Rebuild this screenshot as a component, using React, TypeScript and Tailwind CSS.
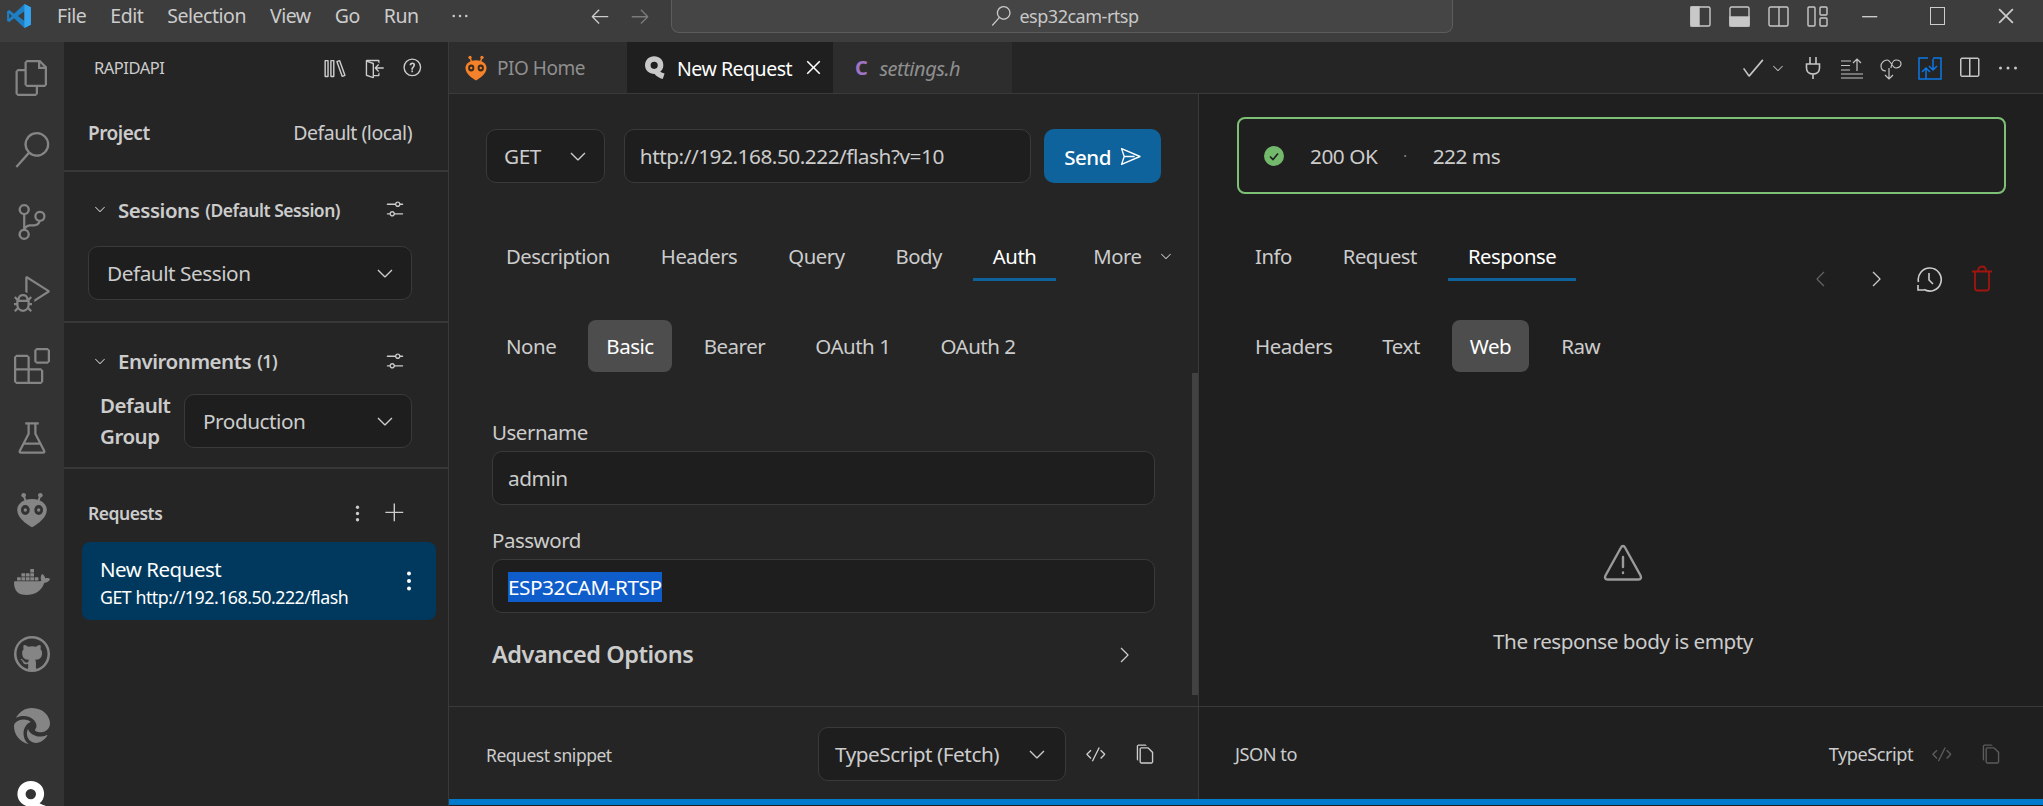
import { ReactNode } from "react";
import {
  VscFiles,
  VscSearch,
  VscSourceControl,
  VscDebugAlt,
  VscExtensions,
  VscBeaker,
  VscChevronDown,
  VscChevronRight,
  VscChevronLeft,
  VscArrowLeft,
  VscArrowRight,
  VscEllipsis,
  VscClose,
  VscChromeClose,
  VscChromeMinimize,
  VscCheck,
  VscLibrary,
  VscSignIn,
  VscQuestion,
  VscSettings,
  VscAdd,
  VscSplitHorizontal,
  VscCode,
  VscCopy,
} from "react-icons/vsc";
import { SiDocker } from "react-icons/si";
import { FaEdge, FaGithub } from "react-icons/fa6";

function RapidLogo({ className }: { className: string }) {
  return (
    <svg viewBox="0 0 24 28" className={className} fill="currentColor">
      <path
        fillRule="evenodd"
        d="M11 0c6.500 0 11 4.600 11 10.600 0 3.300-1.400 6-3.800 7.800 1.600 1 3.200 1.700 5.300 2.100l-2.200 6.600c-4-.7-7.400-3-9.800-5.800C5 21.300 0 16.800 0 10.800 0 4.700 4.600 0 11 0zm0 6.500a4.300 4.300 0 100 8.600 4.300 4.300 0 000-8.600z"
      />
    </svg>
  );
}

function PioLogo({ className, gray }: { className: string; gray?: boolean }) {
  const fill = gray ? "#858585" : "#f5822a";
  const eye = gray ? "#333333" : "#3a2a1c";
  return (
    <svg viewBox="0 0 24 28" className={className}>
      <path d="M7 7L5.500 2.500M17 7l1.500-4.500" stroke={fill} strokeWidth="1.500" />
      <circle cx="5.500" cy="2.500" r="1.800" fill={fill} />
      <circle cx="18.500" cy="2.500" r="1.800" fill={fill} />
      <path
        fill={fill}
        d="M12 5.500c6.500 0 11.500 3.500 11.500 8.500 0 6-7 11-11.500 13.500C7.500 25 .5 20 .5 14c0-5 5-8.500 11.500-8.500z"
      />
      <ellipse cx="6.800" cy="14" rx="3.400" ry="3.800" fill={eye} />
      <ellipse cx="17.200" cy="14" rx="3.400" ry="3.800" fill={eye} />
      <circle cx="6.800" cy="14" r="1.300" fill={fill} />
      <circle cx="17.200" cy="14" r="1.300" fill={fill} />
    </svg>
  );
}

function Kebab({ big }: { big?: boolean }) {
  return (
    <svg
      viewBox="0 0 6 20"
      className={big ? "w-[6px] h-[20px]" : "w-[5px] h-[17px]"}
      fill="currentColor"
    >
      <circle cx="3" cy="2.500" r="2" />
      <circle cx="3" cy="10" r="2" />
      <circle cx="3" cy="17.500" r="2" />
    </svg>
  );
}

function Activity() {
  const icon = "w-9 h-9";
  const items: ReactNode[] = [
    <VscFiles className={icon} />,
    <VscSearch className={icon} />,
    <VscSourceControl className={icon} />,
    <VscDebugAlt className={icon} />,
    <VscExtensions className={icon} />,
    <VscBeaker className={icon} />,
    <PioLogo className="w-[32px] h-[36px]" gray />,
    <SiDocker className={icon} />,
    <span className="w-[36px] h-[36px] rounded-full bg-[#858585] flex items-center justify-center">
      <FaGithub className="w-[32px] h-[32px] text-[#333333]" />
    </span>,
    <FaEdge className="w-[36px] h-[36px]" />,
    <RapidLogo className="w-[30px] h-[34px] text-white" />,
  ];
  return (
    <div className="w-16 shrink-0 bg-[#333333] text-[#858585] overflow-hidden flex flex-col">
      {items.map((it, i) => (
        <div key={i} className="h-[72px] shrink-0 flex items-center justify-center">
          {it}
        </div>
      ))}
    </div>
  );
}

function LayoutIcon({ kind }: { kind: string }) {
  return (
    <svg viewBox="0 0 21 21" className="w-[21px] h-[21px]" fill="none" stroke="#c8c8c8" strokeWidth="1.400">
      {kind === "grid" ? (
        <g>
          <rect x="1" y="1" width="7" height="19" rx="1" />
          <rect x="13" y="1" width="7" height="8" rx="1" />
          <rect x="13" y="12" width="7" height="8" rx="1" />
        </g>
      ) : (
        <rect x="1" y="1" width="19" height="19" rx="1.500" />
      )}
      {kind === "left" && <rect x="1" y="1" width="8" height="19" fill="#c8c8c8" />}
      {kind === "bottom" && <rect x="1" y="11" width="19" height="9" fill="#c8c8c8" />}
      {kind === "right" && <path d="M11 1v19" />}
    </svg>
  );
}

function VsLogo() {
  return (
    <svg viewBox="0 0 24 24" className="ml-[6px] w-[26px] h-[26px] shrink-0">
      <path fill="#1f7fc4" d="M17 1L7.500 10 3 6.500 1 7.500v9l2 1 4.500-3.500L17 23l6-3V4l-6-3zM3 9.500l2.500 2.500L3 14.500v-5zM17 7.500v9L11 12l6-4.500z" />
      <path fill="#35a4ef" d="M17 1l6 3v16l-6 3V1z" />
    </svg>
  );
}

function TitleBar() {
  const menu = ["File", "Edit", "Selection", "View", "Go", "Run"];
  return (
    <div className="h-[42px] shrink-0 bg-[#3d3d3d] flex items-center pb-[10px] text-[19.500px] text-[#cccccc]">
      <div className="w-[671px] shrink-0 flex items-center">
        <VsLogo />
        <div className="ml-[25px] flex gap-[24px]">
          {menu.map((m) => (
            <span key={m}>{m}</span>
          ))}
        </div>
        <VscEllipsis className="ml-[31px] w-[20px] h-[20px]" />
        <VscArrowLeft className="ml-auto w-[22px] h-[22px]" />
        <VscArrowRight className="ml-[18px] mr-[20px] w-[22px] h-[22px] text-[#7b7b7b]" />
      </div>
      <div className="w-[782px] h-[33px] self-start border border-t-0 border-[#5c5c5c] rounded-b-[8px] bg-[#454545] flex items-center justify-center gap-[8px] pl-[6px] text-[18px] text-[#c8c8c8]">
        <VscSearch className="w-[20px] h-[20px]" />
        <span>esp32cam-rtsp</span>
      </div>
      <div className="ml-[237px] flex gap-[18px]">
        <LayoutIcon kind="left" />
        <LayoutIcon kind="bottom" />
        <LayoutIcon kind="right" />
        <LayoutIcon kind="grid" />
      </div>
      <VscChromeMinimize className="ml-[30px] w-[22px] h-[22px]" />
      <div className="ml-[50px] w-[15px] h-[18px] border border-[#cccccc]" />
      <VscChromeClose className="ml-[50px] w-[22px] h-[22px]" />
    </div>
  );
}

function Select({ label, className }: { label: string; className: string }) {
  return (
    <div
      className={`h-[54px] bg-[#1e1e1e] border border-[#3a3a3a] rounded-[10px] flex items-center justify-between text-[20.800px] text-[#cccccc] ${className}`}
    >
      <span className="pt-[2px]">{label}</span>
      <VscChevronDown className="w-[24px] h-[24px]" />
    </div>
  );
}

function Sidebar() {
  return (
    <div className="w-[385px] shrink-0 bg-[#252525] border-r border-[#3a3a3a] flex flex-col text-[#cccccc]">
      <div className="h-[52px] shrink-0 pl-[30px] pr-[24px] flex items-center justify-between">
        <span className="text-[16.500px]">RAPIDAPI</span>
        <div className="flex items-center gap-[17px]">
          <VscLibrary className="w-[23px] h-[23px]" />
          <VscSignIn className="w-[22px] h-[22px]" />
          <VscQuestion className="w-[22px] h-[22px]" />
        </div>
      </div>
      <div className="h-[78px] shrink-0 pl-[24px] pr-[36px] pt-[2px] flex items-center justify-between border-b-2 border-[#383838] text-[19.500px]">
        <span className="font-semibold text-[19px]">Project</span>
        <span>Default (local)</span>
      </div>
      <div className="h-[151px] shrink-0 pl-[24px] pr-[36px] border-b-2 border-[#383838] flex flex-col">
        <div className="h-[74px] shrink-0 flex items-center">
          <VscChevronDown className="ml-[4px] w-[16px] h-[16px]" />
          <span className="ml-[10px] pt-[2px] font-semibold text-[20.500px]">Sessions</span>
          <span className="ml-[6px] pt-[2px] font-semibold text-[17.500px]">(Default Session)</span>
          <VscSettings className="ml-auto mr-[6px] w-[22px] h-[22px]" />
        </div>
        <Select label="Default Session" className="pl-[18px] pr-[14px]" />
      </div>
      <div className="h-[146px] shrink-0 pl-[24px] pr-[36px] border-b-2 border-[#383838] flex flex-col">
        <div className="h-[76px] -mb-[10px] shrink-0 flex items-center">
          <VscChevronDown className="ml-[4px] w-[16px] h-[16px]" />
          <span className="ml-[10px] font-semibold text-[20.500px]">Environments</span>
          <span className="ml-[6px] font-semibold text-[17.500px]">(1)</span>
          <VscSettings className="ml-auto mr-[6px] w-[22px] h-[22px]" />
        </div>
        <div className="flex items-center">
          <span className="ml-[12px] w-[84px] pt-[1px] font-semibold text-[20.500px] leading-[31px]">Default Group</span>
          <Select label="Production" className="flex-1 pl-[18px] pr-[14px]" />
        </div>
      </div>
      <div className="h-[73px] shrink-0 pl-[24px] pr-[42px] pt-[31px]">
        <div className="h-[26px] flex items-center justify-between">
          <span className="font-semibold text-[17.500px]">Requests</span>
          <div className="flex items-center gap-[24px]">
            <Kebab />
            <VscAdd className="w-[22px] h-[22px]" />
          </div>
        </div>
      </div>
      <div className="ml-[18px] mr-[12px] h-[78px] bg-[#00395d] rounded-[8px] pl-[18px] pr-[24px] flex items-center justify-between text-white">
        <div>
          <div className="text-[20.500px] leading-[31px]">New Request</div>
          <div className="text-[17.800px] leading-[24px]">GET http://192.168.50.222/flash</div>
        </div>
        <Kebab big />
      </div>
    </div>
  );
}

function PlugIcon() {
  return (
    <svg viewBox="0 0 24 24" className="w-[24px] h-[24px]" fill="none" stroke="currentColor" strokeWidth="1.600">
      <path d="M9 1v7M15 1v7M5.500 8h13v4c0 3.500-2.500 6-6.500 6s-6.500-2.500-6.500-6V8zM12 18v5" />
    </svg>
  );
}

function EditorTabs() {
  const tool = "w-[24px] h-[24px]";
  return (
    <div className="h-[52px] shrink-0 bg-[#252525] border-b border-[#3a3a3a] flex items-stretch text-[19px]">
      <div className="w-[178px] flex items-center pl-[16px] gap-[10px] text-[#8f8f8f] bg-[#2d2d2d]">
        <PioLogo className="w-[22px] h-[26px]" />
        <span className="pt-[2px]">PIO Home</span>
      </div>
      <div className="w-[206px] bg-[#1f1f1f] flex items-center pl-[18px] text-white">
        <RapidLogo className="w-[20px] h-[24px] text-[#c8c8c8]" />
        <span className="ml-[12px] pt-[2px] text-[19.500px]">New Request</span>
        <VscClose className="ml-[9px] w-[25px] h-[25px]" />
      </div>
      <div className="w-[179px] bg-[#2d2d2d] flex items-center pl-[22px] text-[#8f8f8f]">
        <span className="font-bold text-[#a074c4] text-[20px]">C</span>
        <span className="ml-[12px] pt-[2px] italic text-[20px]">settings.h</span>
      </div>
      <div className="flex-1 flex items-center justify-end gap-[15px] pr-[23px] text-[#c5c5c5]">
        <div className="flex items-center gap-[4px]">
          <VscCheck className="w-[26px] h-[26px]" />
          <VscChevronDown className="w-[16px] h-[16px]" />
        </div>
        <PlugIcon />
        <svg viewBox="0 0 24 24" className={tool} fill="none" stroke="currentColor" strokeWidth="1.200">
          <path d="M1 5h10M1 9.500h9M1 14h9M1 18h22M1 22h22M17 15V3M13 7l4-4 4 4" />
        </svg>
        <svg viewBox="0 0 24 24" className={tool} fill="none" stroke="currentColor" strokeWidth="1.200">
          <path d="M7 15c-4 0-5-3-5-5 0-3 3-6 6-6 4 0 5 8 9 8 3 0 5-2 5-4 0-3-2-4-5-4-4 0-5 8-5 8" />
          <path d="M10 23V12M6 19l4 4 4-4" />
        </svg>
        <svg viewBox="0 0 24 24" className={tool} fill="none" stroke="#0a78e8" strokeWidth="1.500">
          <path d="M10 2H1v21h22V2h-8M15 3v11M11 10l4 4 4-4M8 23V12M4 16l4-4 4 4" />
        </svg>
        <VscSplitHorizontal className={tool} />
        <VscEllipsis className={tool} />
      </div>
    </div>
  );
}

function Tabs({ items, active, className }: { items: string[]; active: string; className: string }) {
  return (
    <div className={`h-[46px] flex text-[20.300px] text-[#cccccc] ${className}`}>
      {items.map((t) => (
        <div
          key={t}
          className={`h-[46px] px-[20px] flex items-center border-b-[3px] ${
            t === active ? "border-[#0e639c] text-white" : "border-transparent"
          } ${t === "More" ? "ml-[6px]" : ""}`}
        >
          {t}
        </div>
      ))}
    </div>
  );
}

function Pills({ items, active, className }: { items: string[]; active: string; className: string }) {
  return (
    <div className={`flex text-[20.500px] text-[#cccccc] ${className}`}>
      {items.map((t) => (
        <div
          key={t}
          className={`h-[52px] px-[18px] pt-[1px] flex items-center rounded-[8px] ${t === active ? "bg-[#4d4d4d] text-white" : ""}`}
        >
          {t}
        </div>
      ))}
    </div>
  );
}

function RequestPane() {
  const field =
    "mt-[5px] h-[54px] bg-[#1e1e1e] border border-[#3a3a3a] rounded-[10px] flex items-center pl-[15px] pt-[2px] text-[20.800px]";
  return (
    <div className="w-[750px] shrink-0 bg-[#252525] border-r border-[#3a3a3a] flex flex-col text-[#cccccc] relative">
      <div className="flex-1 flex flex-col">
        <div className="flex pl-[37px] pr-[37px] mt-[35px] gap-[13px]">
          <Select label="GET" className="w-[119px] pl-[17px] pr-[14px]" />
          <div className="ml-[6px] w-[408px] h-[54px] bg-[#1e1e1e] border border-[#3a3a3a] rounded-[10px] flex items-center pl-[15px] pt-[2px] text-[20.800px]">
            http://192.168.50.222/flash?v=10
          </div>
          <div className="w-[117px] h-[54px] bg-[#0e639c] rounded-[10px] flex items-center justify-center gap-[9px] text-[20.500px] text-white font-medium">
            <span className="pt-[2px]">Send</span>
            <svg viewBox="0 0 20 18" className="w-[21px] h-[19px]" fill="none" stroke="currentColor" strokeWidth="1.300" strokeLinejoin="round">
              <path d="M1.500 1.500L19 9 1.500 16.500 4 9 1.500 1.500zM4 9h10" />
            </svg>
          </div>
        </div>
        <div className="flex items-start pl-[37px] mt-[52px]">
          <Tabs items={["Description", "Headers", "Query", "Body", "Auth", "More"]} active="Auth" className="gap-[11px]" />
          <VscChevronDown className="ml-[-3px] mt-[13px] w-[16px] h-[16px]" />
        </div>
        <Pills items={["None", "Basic", "Bearer", "OAuth 1", "OAuth 2"]} active="Basic" className="pl-[39px] mt-[39px] gap-[14px]" />
        <div className="mx-[43px] mt-[46px]">
          <label className="block text-[20.500px] leading-[28px]">Username</label>
          <div className={field}>admin</div>
          <label className="block text-[20.500px] leading-[28px] mt-[21px]">Password</label>
          <div className={field}>
            <span className="bg-[#0f5dca] text-white leading-[30px]">ESP32CAM-RTSP</span>
          </div>
          <div className="mt-[24px] flex items-center justify-between">
            <span className="text-[23.500px] font-semibold">Advanced Options</span>
            <VscChevronRight className="mr-[19px] w-[24px] h-[24px]" />
          </div>
        </div>
      </div>
      <div className="absolute right-0 top-[279px] w-[6px] h-[322px] bg-[#424242]" />
      <div className="h-[93px] shrink-0 border-t border-[#3a3a3a] pl-[37px] pr-[42px] pt-[2px] flex items-center justify-between">
        <span className="pt-[2px] text-[17.500px]">Request snippet</span>
        <div className="flex items-center">
          <Select label="TypeScript (Fetch)" className="w-[248px] pl-[16px] pr-[16px]" />
          <VscCode className="ml-[19px] w-[22px] h-[22px]" />
          <VscCopy className="ml-[27px] w-[22px] h-[22px]" />
        </div>
      </div>
    </div>
  );
}

function ResponsePane() {
  return (
    <div className="flex-1 bg-[#1f1f1f] flex flex-col text-[#cccccc]">
      <div className="flex-1 flex flex-col">
        <div className="ml-[38px] mr-[37px] mt-[23px] h-[77px] border-2 border-[#7ec176] rounded-[8px] flex items-center pl-[25px] text-[20.800px]">
          <svg viewBox="0 0 20 20" className="w-[20px] h-[20px]">
            <circle cx="10" cy="10" r="10" fill="#73b96c" />
            <path d="M6 10.500l3 3 5-6" fill="none" stroke="#1f1f1f" strokeWidth="1.600" />
          </svg>
          <span className="ml-[26px] pt-[2px]">200 OK</span>
          <span className="ml-[26px] text-[#8a8a8a] text-[14px]">·</span>
          <span className="ml-[26px] pt-[2px]">222 ms</span>
        </div>
        <div className="h-[46px] flex items-start pl-[36px] pr-[51px] mt-[41px]">
          <Tabs items={["Info", "Request", "Response"]} active="Response" className="gap-[11px]" />
          <div className="ml-auto flex items-center mt-[30px]">
            <VscChevronLeft className="w-[24px] h-[24px] text-[#606060]" />
            <VscChevronRight className="ml-[31px] w-[24px] h-[24px]" />
            <svg viewBox="0 0 26 26" className="ml-[28px] w-[26px] h-[26px]" fill="none" stroke="currentColor" strokeWidth="1.600">
              <path d="M8 23.500A11.500 11.500 0 1 0 2.500 16M13 7v7l4 4M2 19v5h6" />
            </svg>
            <svg viewBox="0 0 20 27" className="ml-[30px] w-[20px] h-[27px] text-[#a1150f]" fill="none" stroke="currentColor" strokeWidth="1.800">
              <path d="M0 6.500h20M6 6.500c0-3 1.500-5 4-5s4 2 4 5M3 6.500V23a2.500 2.500 0 0 0 2.500 2.500h9A2.500 2.500 0 0 0 17 23V6.500" />
            </svg>
          </div>
        </div>
        <Pills items={["Headers", "Text", "Web", "Raw"]} active="Web" className="pl-[38px] mt-[39px] gap-[14px]" />
        <div className="mt-[172px] pl-[4px] flex flex-col items-center text-[20.700px]">
          <svg viewBox="0 0 42 38" className="w-[42px] h-[38px] text-[#9a9a9a]" fill="none" stroke="currentColor" strokeWidth="2.400" strokeLinejoin="round" strokeLinecap="round">
            <path d="M21 2c1 0 1.500.5 2 1.500l15.500 28c1 2 .5 4-2 4h-31c-2.500 0-3-2-2-4l15.500-28c.5-1 1-1.500 2-1.500zM21 13v10M21 28.500v.5" />
          </svg>
          <span className="mt-[44px]">The response body is empty</span>
        </div>
      </div>
      <div className="h-[93px] shrink-0 border-t border-[#3a3a3a] pl-[36px] pr-[41px] pt-[2px] flex items-center justify-between text-[18.200px]">
        <span className="pt-[2px]">JSON to</span>
        <div className="flex items-center">
          <span className="pt-[2px]">TypeScript</span>
          <VscCode className="ml-[18px] w-[22px] h-[22px] text-[#5c5c5c]" />
          <VscCopy className="ml-[27px] w-[22px] h-[22px] text-[#5c5c5c]" />
        </div>
      </div>
    </div>
  );
}

export default function App() {
  return (
    <div className="w-[2043px] h-[806px] overflow-hidden flex flex-col bg-[#252525] font-['Noto_Sans','Open_Sans',sans-serif] tracking-[-0.03em]">
      <TitleBar />
      <div className="flex-1 flex min-h-0">
        <Activity />
        <Sidebar />
        <div className="flex-1 flex flex-col min-w-0">
          <EditorTabs />
          <div className="flex-1 flex min-h-0">
            <RequestPane />
            <ResponsePane />
          </div>
          <div className="h-[7px] shrink-0 bg-[#007acc] border-b border-[#1e1e1e]" />
        </div>
      </div>
    </div>
  );
}
